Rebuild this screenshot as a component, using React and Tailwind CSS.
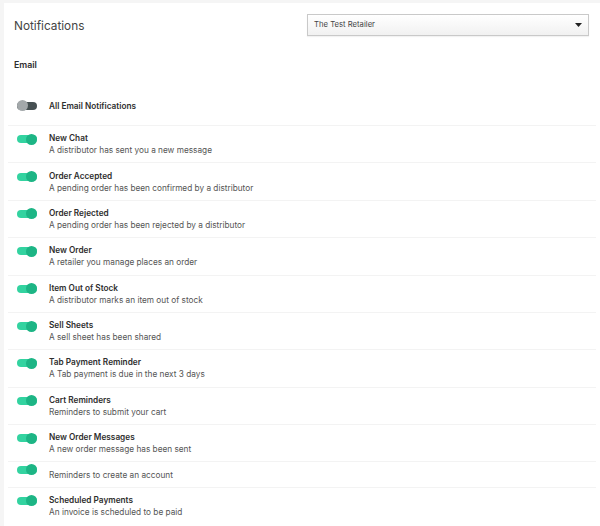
const ROWS = [
  { title: 'New Chat', text: 'A distributor has sent you a new message' },
  { title: 'Order Accepted', text: 'A pending order has been confirmed by a distributor' },
  { title: 'Order Rejected', text: 'A pending order has been rejected by a distributor' },
  { title: 'New Order', text: 'A retailer you manage places an order' },
  { title: 'Item Out of Stock', text: 'A distributor marks an item out of stock' },
  { title: 'Sell Sheets', text: 'A sell sheet has been shared' },
  { title: 'Tab Payment Reminder', text: 'A Tab payment is due in the next 3 days' },
  { title: 'Cart Reminders', text: 'Reminders to submit your cart' },
  { title: 'New Order Messages', text: 'A new order message has been sent' },
  { title: '', text: 'Reminders to create an account' },
  { title: 'Scheduled Payments', text: 'An invoice is scheduled to be paid' },
]

function Toggle({ on }) {
  return (
    <div className="relative flex h-[11px] w-[20px] shrink-0 items-center">
      <div className={'h-[8px] w-full rounded-full ' + (on ? 'bg-[#33d3a0]' : 'bg-[#465052]')} />
      <div
        className={
          'absolute top-0 h-[11px] w-[11px] rounded-full ' +
          (on ? 'right-0 bg-[#1db585]' : 'left-0 bg-[#a3a8aa]')
        }
      />
    </div>
  )
}

function Row({ title, text }) {
  return (
    <div className="flex items-center gap-[12px] border-t border-[#f3f3f3] py-[6.2px] pl-[9px]">
      <div className="relative top-[-5px]">
        <Toggle on />
      </div>
      <div className="leading-[12px]">
        {title ? <div className="font-semibold text-[#2e2e2e]">{title}</div> : null}
        <div className="text-[#555]">{text}</div>
      </div>
    </div>
  )
}

export default function App() {
  return (
    <div className="h-[526px] w-[600px] overflow-hidden bg-[#f5f5f5] pl-[4px] pt-[3px] font-['Inter',sans-serif] text-[8.25px]">
      <div className="h-full bg-white">
        <div className="flex items-center justify-between pl-[10px] pr-[11px] pt-[11px]">
          <div className="mt-[3px] text-[11.8px] text-[#444]">Notifications</div>
          <div className="flex h-[22px] w-[282px] items-center justify-between border border-[#c9c9c9] bg-linear-to-b from-white to-[#f1f1f1] pl-[6px] pr-[6px] shadow-[0_1px_1px_rgba(0,0,0,0.05)]">
            <span className="text-[7.7px] text-[#444]">The Test Retailer</span>
            <svg width="7" height="4" viewBox="0 0 7 4">
              <path d="M0 0h7L3.5 4z" fill="#222" />
            </svg>
          </div>
        </div>

        <div className="mt-[23px] pl-[10px] text-[8.8px] font-semibold leading-[12px] text-[#2e2e2e]">
          Email
        </div>

        <div className="mx-[4px]">
          <div className="flex items-center gap-[12px] pb-[13.5px] pl-[9px] pt-[28.5px]">
            <Toggle on={false} />
            <div className="font-semibold leading-[12px] text-[#2e2e2e]">All Email Notifications</div>
          </div>
          {ROWS.map((r, i) => (
            <Row key={i} title={r.title} text={r.text} />
          ))}
        </div>
      </div>
    </div>
  )
}
